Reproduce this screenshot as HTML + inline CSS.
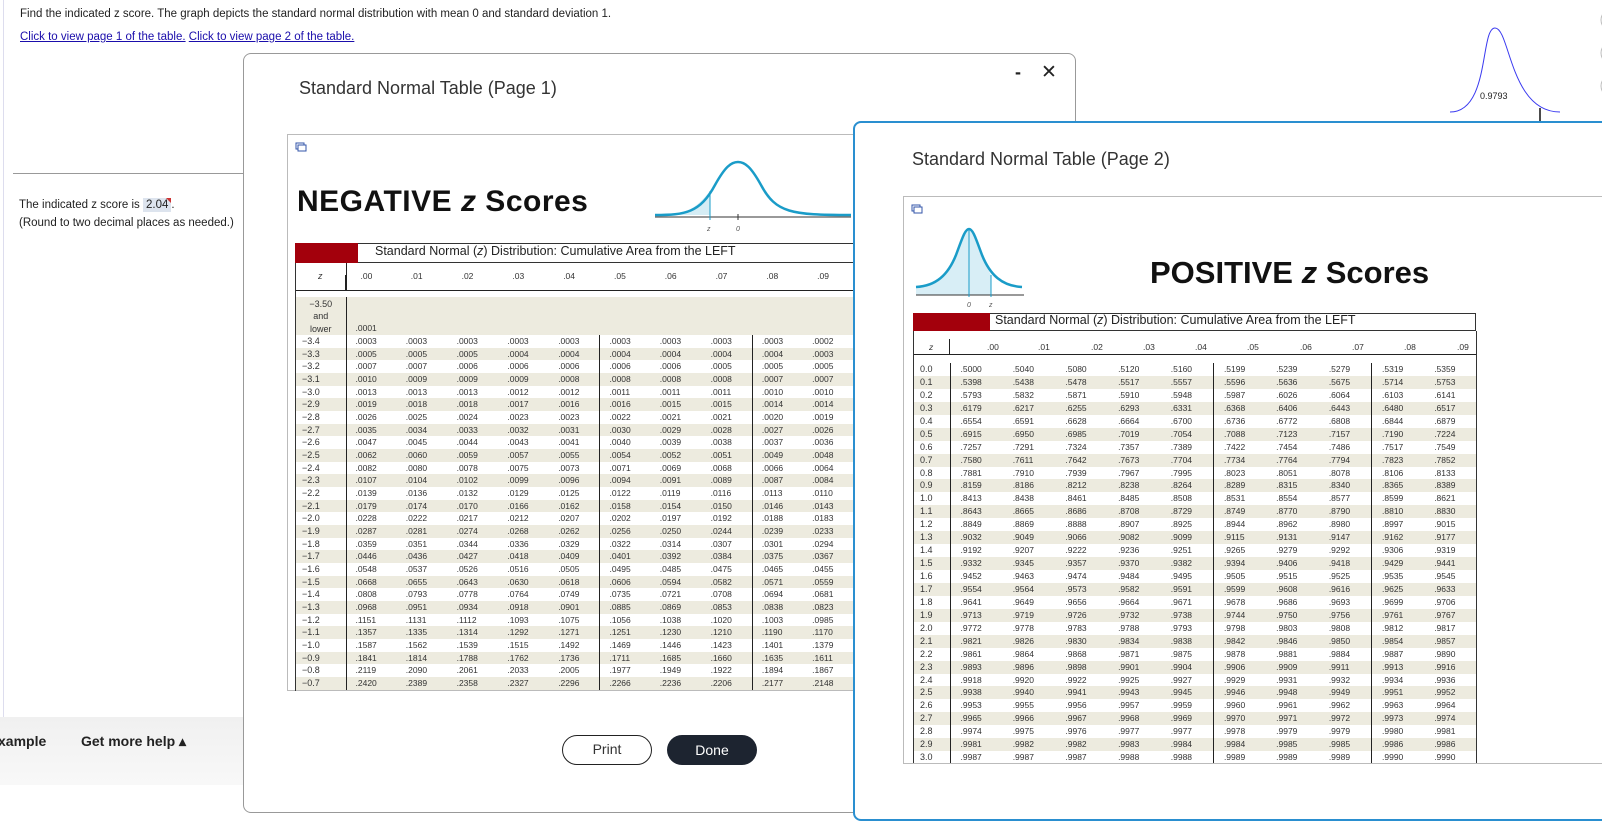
<!DOCTYPE html>
<html><head><meta charset="utf-8"><style>
*{margin:0;padding:0;box-sizing:border-box}
body{width:1602px;height:785px;overflow:hidden;background:#fff;font-family:"Liberation Sans",sans-serif;position:relative;color:#222}
.abs{position:absolute}
a{color:#1a0dab;}
table{border-collapse:collapse;table-layout:fixed;font-family:"Liberation Sans",sans-serif;color:#333}
td{white-space:nowrap;overflow:hidden;padding:0}
.t1 td{height:12.67px;font-size:8.5px;line-height:12.67px;padding-left:9px}
.t2 td{height:12.93px;font-size:8.5px;line-height:12.93px;padding-left:10px}
.t1 td:first-child,.t2 td:first-child{padding-left:6px;border-right:1px solid #222;font-size:9px}
.t1 tr:nth-child(even) td,.t2 tr:nth-child(even) td{background:#edebdf}
.t1 td:nth-child(7),.t1 td:nth-child(10),.t2 td:nth-child(7),.t2 td:nth-child(10){border-left:1px solid #222}
.hdr td{font-size:8.5px;color:#333}
</style></head><body>

<div class="abs" style="left:0;top:0;width:4px;height:720px;border-right:1px solid #dde"></div>
<div class="abs" style="left:20px;top:8px;font-size:11.5px;color:#222">Find the indicated z score. The graph depicts the standard normal distribution with mean 0 and standard deviation 1.</div>
<div class="abs" style="left:20px;top:31px;font-size:11.5px"><a style="text-decoration:underline">Click to view page 1 of the table.</a> <a style="text-decoration:underline">Click to view page 2 of the table.</a></div>
<div class="abs" style="left:13px;top:173px;width:240px;border-top:1px solid #999"></div>
<div class="abs" style="left:19px;top:199px;font-size:11.5px;color:#222">The indicated z score is <span style="background:#dde4ee;padding:1px 3px;position:relative">2.04<span style="position:absolute;right:0;top:0;border-top:5px solid #c33;border-left:5px solid transparent"></span></span>.</div>
<div class="abs" style="left:19px;top:217px;font-size:11.5px;color:#222">(Round to two decimal places as needed.)</div>
<div class="abs" style="left:0;top:717px;width:250px;height:68px;background:linear-gradient(#f0f0f0,#f8f8f8)"></div>
<div class="abs" style="left:-2px;top:733px;font-size:14px;font-weight:bold;color:#222">xample</div>
<div class="abs" style="left:81px;top:733px;font-size:14px;font-weight:bold;color:#222">Get more help ▴</div>

<svg class="abs" style="left:1380px;top:0" width="222" height="130">
<path d="M70 112 C110 112,100 28,115 28 C130 28,130 112,180 112" fill="none" stroke="#3a3af0" stroke-width="1"/>
<line x1="160" y1="108" x2="160" y2="122" stroke="#111" stroke-width="1.5"/>
<text x="100" y="99" font-size="9" font-family="Liberation Sans" fill="#222">0.9793</text>
<circle cx="232" cy="20" r="11" fill="#fff" stroke="#bbb"/>
<circle cx="232" cy="53" r="11" fill="#fff" stroke="#bbb"/>
<circle cx="232" cy="86" r="11" fill="#fff" stroke="#bbb"/>
</svg>

<div class="abs" style="left:243px;top:53px;width:833px;height:760px;background:#fff;border:1px solid #999;border-radius:8px"></div>
<div class="abs" style="left:299px;top:78px;font-size:18px;color:#333">Standard Normal Table (Page 1)</div>
<div class="abs" style="left:1015px;top:62px;font-size:18px;color:#222;font-weight:bold">-</div>
<div class="abs" style="left:1041px;top:61px;font-size:19px;color:#222">✕</div>
<div class="abs" style="left:287px;top:134px;width:600px;height:557px;border:1px solid #bbb;overflow:hidden">
<svg class="abs" style="left:7px;top:7px" width="12" height="11"><rect x="1" y="1" width="8" height="6" fill="none" stroke="#3355aa"/><rect x="3" y="3" width="8" height="6" fill="#fff" stroke="#3355aa"/></svg>
</div>
<div class="abs" style="left:297px;top:185px;font-size:30px;font-weight:bold;color:#111;letter-spacing:0.5px">NEGATIVE <i style="font-weight:bold">z</i> Scores</div>
<svg class="abs" style="left:655px;top:155px" width="200" height="80">
<path d="M0 60 C30 60,40 55,55 36 L55 60 Z" fill="#d5edf5"/>
<path d="M0 60 C30 60,45 58,60 30 C70 12,76 7,83 7 C90 7,96 12,106 30 C121 58,136 60,196 60" fill="none" stroke="#1a9cc8" stroke-width="2.5"/>
<line x1="0" y1="62" x2="196" y2="62" stroke="#333"/>
<line x1="55" y1="36" x2="55" y2="65" stroke="#1a9cc8"/>
<line x1="83" y1="59" x2="83" y2="65" stroke="#333"/>
<text x="52" y="76" font-size="7" font-style="italic" fill="#555">z</text><text x="81" y="76" font-size="7" font-style="italic" fill="#555">0</text>
</svg>
<div class="abs" style="left:295px;top:243px;width:560px;height:20px;border:1px solid #333;border-left:none"></div>
<div class="abs" style="left:295px;top:243px;width:63px;height:20px;background:#a3000c"></div>
<div class="abs" style="left:375px;top:244px;font-size:12.5px;color:#222">Standard Normal (<i>z</i>) Distribution: Cumulative Area from the LEFT</div>
<div class="abs" style="left:295px;top:263px;width:560px;height:428px;border-left:1px solid #333;overflow:hidden">
<table class="t1 hdr" style="width:558px;position:absolute;top:0;left:0;border-bottom:1px solid #222"><colgroup><col style="width:50px"><col span="10" style="width:50.8px"></colgroup>
<tr><td style="height:27px;padding-left:22px;font-style:italic;background:#fff;line-height:27px">z</td><td style="background:#fff;padding-left:14px">.00</td><td style="background:#fff;padding-left:14px">.01</td><td style="background:#fff;padding-left:14px;border-left:none">.02</td><td style="background:#fff;padding-left:14px">.03</td><td style="background:#fff;padding-left:14px">.04</td><td style="background:#fff;padding-left:14px;border-left:none">.05</td><td style="background:#fff;padding-left:14px">.06</td><td style="background:#fff;padding-left:14px">.07</td><td style="background:#fff;padding-left:14px;border-left:none">.08</td><td style="background:#fff;padding-left:14px">.09</td></tr></table>
<div class="abs" style="left:49px;top:12px;height:16px;border-left:1px solid #222"></div>
<table class="t1" style="width:558px;position:absolute;top:34px;left:0"><colgroup><col style="width:50px"><col span="10" style="width:50.8px"></colgroup>
<tr><td style="height:38px;line-height:12.5px;text-align:center;padding:0;background:#edebdf;white-space:normal;vertical-align:bottom">−3.50<br>and<br>lower</td><td style="vertical-align:bottom;background:#edebdf">.0001</td><td style="background:#edebdf"></td><td style="background:#edebdf;border-left:none"></td><td style="background:#edebdf"></td><td style="background:#edebdf"></td><td style="background:#edebdf;border-left:none"></td><td style="background:#edebdf"></td><td style="background:#edebdf"></td><td style="background:#edebdf;border-left:none"></td><td style="background:#edebdf"></td></tr>
</table>
<table class="t1" style="width:558px;position:absolute;top:72px;left:0"><colgroup><col style="width:50px"><col span="10" style="width:50.8px"></colgroup>
<tr><td>−3.4<td>.0003<td>.0003<td>.0003<td>.0003<td>.0003<td>.0003<td>.0003<td>.0003<td>.0003<td>.0002
<tr><td>−3.3<td>.0005<td>.0005<td>.0005<td>.0004<td>.0004<td>.0004<td>.0004<td>.0004<td>.0004<td>.0003
<tr><td>−3.2<td>.0007<td>.0007<td>.0006<td>.0006<td>.0006<td>.0006<td>.0006<td>.0005<td>.0005<td>.0005
<tr><td>−3.1<td>.0010<td>.0009<td>.0009<td>.0009<td>.0008<td>.0008<td>.0008<td>.0008<td>.0007<td>.0007
<tr><td>−3.0<td>.0013<td>.0013<td>.0013<td>.0012<td>.0012<td>.0011<td>.0011<td>.0011<td>.0010<td>.0010
<tr><td>−2.9<td>.0019<td>.0018<td>.0018<td>.0017<td>.0016<td>.0016<td>.0015<td>.0015<td>.0014<td>.0014
<tr><td>−2.8<td>.0026<td>.0025<td>.0024<td>.0023<td>.0023<td>.0022<td>.0021<td>.0021<td>.0020<td>.0019
<tr><td>−2.7<td>.0035<td>.0034<td>.0033<td>.0032<td>.0031<td>.0030<td>.0029<td>.0028<td>.0027<td>.0026
<tr><td>−2.6<td>.0047<td>.0045<td>.0044<td>.0043<td>.0041<td>.0040<td>.0039<td>.0038<td>.0037<td>.0036
<tr><td>−2.5<td>.0062<td>.0060<td>.0059<td>.0057<td>.0055<td>.0054<td>.0052<td>.0051<td>.0049<td>.0048
<tr><td>−2.4<td>.0082<td>.0080<td>.0078<td>.0075<td>.0073<td>.0071<td>.0069<td>.0068<td>.0066<td>.0064
<tr><td>−2.3<td>.0107<td>.0104<td>.0102<td>.0099<td>.0096<td>.0094<td>.0091<td>.0089<td>.0087<td>.0084
<tr><td>−2.2<td>.0139<td>.0136<td>.0132<td>.0129<td>.0125<td>.0122<td>.0119<td>.0116<td>.0113<td>.0110
<tr><td>−2.1<td>.0179<td>.0174<td>.0170<td>.0166<td>.0162<td>.0158<td>.0154<td>.0150<td>.0146<td>.0143
<tr><td>−2.0<td>.0228<td>.0222<td>.0217<td>.0212<td>.0207<td>.0202<td>.0197<td>.0192<td>.0188<td>.0183
<tr><td>−1.9<td>.0287<td>.0281<td>.0274<td>.0268<td>.0262<td>.0256<td>.0250<td>.0244<td>.0239<td>.0233
<tr><td>−1.8<td>.0359<td>.0351<td>.0344<td>.0336<td>.0329<td>.0322<td>.0314<td>.0307<td>.0301<td>.0294
<tr><td>−1.7<td>.0446<td>.0436<td>.0427<td>.0418<td>.0409<td>.0401<td>.0392<td>.0384<td>.0375<td>.0367
<tr><td>−1.6<td>.0548<td>.0537<td>.0526<td>.0516<td>.0505<td>.0495<td>.0485<td>.0475<td>.0465<td>.0455
<tr><td>−1.5<td>.0668<td>.0655<td>.0643<td>.0630<td>.0618<td>.0606<td>.0594<td>.0582<td>.0571<td>.0559
<tr><td>−1.4<td>.0808<td>.0793<td>.0778<td>.0764<td>.0749<td>.0735<td>.0721<td>.0708<td>.0694<td>.0681
<tr><td>−1.3<td>.0968<td>.0951<td>.0934<td>.0918<td>.0901<td>.0885<td>.0869<td>.0853<td>.0838<td>.0823
<tr><td>−1.2<td>.1151<td>.1131<td>.1112<td>.1093<td>.1075<td>.1056<td>.1038<td>.1020<td>.1003<td>.0985
<tr><td>−1.1<td>.1357<td>.1335<td>.1314<td>.1292<td>.1271<td>.1251<td>.1230<td>.1210<td>.1190<td>.1170
<tr><td>−1.0<td>.1587<td>.1562<td>.1539<td>.1515<td>.1492<td>.1469<td>.1446<td>.1423<td>.1401<td>.1379
<tr><td>−0.9<td>.1841<td>.1814<td>.1788<td>.1762<td>.1736<td>.1711<td>.1685<td>.1660<td>.1635<td>.1611
<tr><td>−0.8<td>.2119<td>.2090<td>.2061<td>.2033<td>.2005<td>.1977<td>.1949<td>.1922<td>.1894<td>.1867
<tr><td>−0.7<td>.2420<td>.2389<td>.2358<td>.2327<td>.2296<td>.2266<td>.2236<td>.2206<td>.2177<td>.2148
</table>
</div>
<div class="abs" style="left:562px;top:735px;width:90px;height:30px;border:1.5px solid #222;border-radius:15px;text-align:center;line-height:27px;font-size:14px;color:#333">Print</div>
<div class="abs" style="left:667px;top:735px;width:90px;height:30px;background:#1d2430;border-radius:15px;text-align:center;line-height:30px;font-size:14px;color:#fff">Done</div>

<div class="abs" style="left:853px;top:121px;width:780px;height:700px;background:#fff;border:2px solid #2a8fd0;border-radius:8px"></div>
<div class="abs" style="left:912px;top:149px;font-size:18px;color:#333">Standard Normal Table (Page 2)</div>
<div class="abs" style="left:903px;top:196px;width:720px;height:568px;border:1px solid #bbb;overflow:hidden">
<svg class="abs" style="left:7px;top:7px" width="12" height="11"><rect x="1" y="1" width="8" height="6" fill="none" stroke="#3355aa"/><rect x="3" y="3" width="8" height="6" fill="#fff" stroke="#3355aa"/></svg>
</div>
<svg class="abs" style="left:912px;top:215px" width="125" height="95">
<path d="M4 72 C24 71,36 60,44 40 C50 24,53 14,57 14 C61 14,64 24,70 40 C73 48,76 55,79 60 L79 80 L4 80 Z" fill="#d8eef6"/>
<path d="M4 72 C24 71,36 60,44 40 C50 24,53 14,57 14 C61 14,64 24,70 40 C78 60,90 71,110 72" fill="none" stroke="#1a9cc8" stroke-width="2.5"/>
<line x1="4" y1="80" x2="112" y2="80" stroke="#333"/>
<line x1="57" y1="14" x2="57" y2="82" stroke="#1a9cc8"/>
<line x1="79" y1="60" x2="79" y2="82" stroke="#1a9cc8"/>
<text x="55" y="92" font-size="7" font-style="italic" fill="#555">0</text><text x="77" y="92" font-size="7" font-style="italic" fill="#555">z</text>
</svg>
<div class="abs" style="left:1150px;top:255px;font-size:31px;font-weight:bold;color:#111">POSITIVE <i>z</i> Scores</div>
<div class="abs" style="left:913px;top:313px;width:563px;height:18px;border:1px solid #333;border-left:none"></div>
<div class="abs" style="left:913px;top:313px;width:77px;height:18px;background:#a3000c"></div>
<div class="abs" style="left:995px;top:313px;font-size:12.5px;color:#222">Standard Normal (<i>z</i>) Distribution: Cumulative Area from the LEFT</div>
<div class="abs" style="left:913px;top:331px;width:564px;height:432px;border-left:1px solid #333;border-right:1px solid #333;overflow:hidden">
<div class="abs" style="left:0;top:0;width:564px;height:24px;border-bottom:1px solid #222;font-size:8.5px;color:#333">
<span class="abs" style="left:15px;top:11px;font-style:italic">z</span>
<span class="abs" style="left:35px;top:8px;height:16px;border-left:1px solid #222"></span>
<span class="abs" style="left:73px;top:11px">.00</span><span class="abs" style="left:124px;top:11px">.01</span><span class="abs" style="left:177px;top:11px">.02</span><span class="abs" style="left:229px;top:11px">.03</span><span class="abs" style="left:281px;top:11px">.04</span><span class="abs" style="left:333px;top:11px">.05</span><span class="abs" style="left:386px;top:11px">.06</span><span class="abs" style="left:438px;top:11px">.07</span><span class="abs" style="left:490px;top:11px">.08</span><span class="abs" style="left:543px;top:11px">.09</span>
</div>
<table class="t2" style="width:563px;position:absolute;top:32px;left:0"><colgroup><col style="width:36px"><col span="10" style="width:52.7px"></colgroup>
<tr><td>0.0<td>.5000<td>.5040<td>.5080<td>.5120<td>.5160<td>.5199<td>.5239<td>.5279<td>.5319<td>.5359
<tr><td>0.1<td>.5398<td>.5438<td>.5478<td>.5517<td>.5557<td>.5596<td>.5636<td>.5675<td>.5714<td>.5753
<tr><td>0.2<td>.5793<td>.5832<td>.5871<td>.5910<td>.5948<td>.5987<td>.6026<td>.6064<td>.6103<td>.6141
<tr><td>0.3<td>.6179<td>.6217<td>.6255<td>.6293<td>.6331<td>.6368<td>.6406<td>.6443<td>.6480<td>.6517
<tr><td>0.4<td>.6554<td>.6591<td>.6628<td>.6664<td>.6700<td>.6736<td>.6772<td>.6808<td>.6844<td>.6879
<tr><td>0.5<td>.6915<td>.6950<td>.6985<td>.7019<td>.7054<td>.7088<td>.7123<td>.7157<td>.7190<td>.7224
<tr><td>0.6<td>.7257<td>.7291<td>.7324<td>.7357<td>.7389<td>.7422<td>.7454<td>.7486<td>.7517<td>.7549
<tr><td>0.7<td>.7580<td>.7611<td>.7642<td>.7673<td>.7704<td>.7734<td>.7764<td>.7794<td>.7823<td>.7852
<tr><td>0.8<td>.7881<td>.7910<td>.7939<td>.7967<td>.7995<td>.8023<td>.8051<td>.8078<td>.8106<td>.8133
<tr><td>0.9<td>.8159<td>.8186<td>.8212<td>.8238<td>.8264<td>.8289<td>.8315<td>.8340<td>.8365<td>.8389
<tr><td>1.0<td>.8413<td>.8438<td>.8461<td>.8485<td>.8508<td>.8531<td>.8554<td>.8577<td>.8599<td>.8621
<tr><td>1.1<td>.8643<td>.8665<td>.8686<td>.8708<td>.8729<td>.8749<td>.8770<td>.8790<td>.8810<td>.8830
<tr><td>1.2<td>.8849<td>.8869<td>.8888<td>.8907<td>.8925<td>.8944<td>.8962<td>.8980<td>.8997<td>.9015
<tr><td>1.3<td>.9032<td>.9049<td>.9066<td>.9082<td>.9099<td>.9115<td>.9131<td>.9147<td>.9162<td>.9177
<tr><td>1.4<td>.9192<td>.9207<td>.9222<td>.9236<td>.9251<td>.9265<td>.9279<td>.9292<td>.9306<td>.9319
<tr><td>1.5<td>.9332<td>.9345<td>.9357<td>.9370<td>.9382<td>.9394<td>.9406<td>.9418<td>.9429<td>.9441
<tr><td>1.6<td>.9452<td>.9463<td>.9474<td>.9484<td>.9495<td>.9505<td>.9515<td>.9525<td>.9535<td>.9545
<tr><td>1.7<td>.9554<td>.9564<td>.9573<td>.9582<td>.9591<td>.9599<td>.9608<td>.9616<td>.9625<td>.9633
<tr><td>1.8<td>.9641<td>.9649<td>.9656<td>.9664<td>.9671<td>.9678<td>.9686<td>.9693<td>.9699<td>.9706
<tr><td>1.9<td>.9713<td>.9719<td>.9726<td>.9732<td>.9738<td>.9744<td>.9750<td>.9756<td>.9761<td>.9767
<tr><td>2.0<td>.9772<td>.9778<td>.9783<td>.9788<td>.9793<td>.9798<td>.9803<td>.9808<td>.9812<td>.9817
<tr><td>2.1<td>.9821<td>.9826<td>.9830<td>.9834<td>.9838<td>.9842<td>.9846<td>.9850<td>.9854<td>.9857
<tr><td>2.2<td>.9861<td>.9864<td>.9868<td>.9871<td>.9875<td>.9878<td>.9881<td>.9884<td>.9887<td>.9890
<tr><td>2.3<td>.9893<td>.9896<td>.9898<td>.9901<td>.9904<td>.9906<td>.9909<td>.9911<td>.9913<td>.9916
<tr><td>2.4<td>.9918<td>.9920<td>.9922<td>.9925<td>.9927<td>.9929<td>.9931<td>.9932<td>.9934<td>.9936
<tr><td>2.5<td>.9938<td>.9940<td>.9941<td>.9943<td>.9945<td>.9946<td>.9948<td>.9949<td>.9951<td>.9952
<tr><td>2.6<td>.9953<td>.9955<td>.9956<td>.9957<td>.9959<td>.9960<td>.9961<td>.9962<td>.9963<td>.9964
<tr><td>2.7<td>.9965<td>.9966<td>.9967<td>.9968<td>.9969<td>.9970<td>.9971<td>.9972<td>.9973<td>.9974
<tr><td>2.8<td>.9974<td>.9975<td>.9976<td>.9977<td>.9977<td>.9978<td>.9979<td>.9979<td>.9980<td>.9981
<tr><td>2.9<td>.9981<td>.9982<td>.9982<td>.9983<td>.9984<td>.9984<td>.9985<td>.9985<td>.9986<td>.9986
<tr><td>3.0<td>.9987<td>.9987<td>.9987<td>.9988<td>.9988<td>.9989<td>.9989<td>.9989<td>.9990<td>.9990
</table>
</div>
</body></html>
